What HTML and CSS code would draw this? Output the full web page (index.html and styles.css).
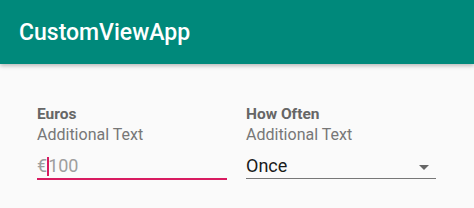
FILE: index.html
```html
<!DOCTYPE html>
<html>
<head>
    <meta charset="utf-8">
    <title>CustomViewApp</title>
    <link rel="stylesheet" href="styles.css">
</head>
<body>
    <div class="toolbar">
        <h1 class="app-title">CustomViewApp</h1>
    </div>

    <div class="content">
        <div class="field">
            <p class="label">Euros</p>
            <p class="extra">Additional Text</p>
            <div class="input active">
                <span class="hint">€</span><span class="cursor"></span><span class="hint">100</span>
            </div>
        </div>

        <div class="field">
            <p class="label">How Often</p>
            <p class="extra">Additional Text</p>
            <div class="input spinner">
                <span class="value">Once</span>
                <svg class="arrow" width="10" height="5" viewBox="0 0 10 5">
                    <path d="M0 0 L10 0 L5 5 Z" fill="#666"/>
                </svg>
            </div>
        </div>
    </div>
</body>
</html>
```
FILE: styles.css
```css
html {
    height: 100%;
}

body {
    margin: 0;
    background: #fafafa;
    font-family: Roboto, "Liberation Sans", sans-serif;
    height: 100%;
}

.toolbar {
    height: 64px;
    background: #00897b;
    display: flex;
    align-items: center;
    padding-left: 19px;
    box-shadow: 0 2px 4px rgba(0, 0, 0, 0.25);
    position: relative;
}

.app-title {
    margin: 0;
    color: #fff;
    font-size: 23px;
    font-weight: 500;
    line-height: 26px;
    padding-top: 1px;
}

.content {
    display: flex;
    gap: 19px;
    padding: 42px 38px 0 37px;
}

.field {
    flex: 1;
}

.label {
    margin: 0;
    font-size: 15.5px;
    line-height: 16px;
    font-weight: bold;
    color: #666;
}

.extra {
    margin: 3px 0 0;
    font-size: 16px;
    line-height: 20px;
    color: #777;
}

.input {
    margin-top: 9px;
    height: 24px;
    font-size: 18px;
    line-height: 24px;
    display: flex;
    align-items: center;
}

.active {
    border-bottom: 2px solid #d81b60;
}

.spinner {
    border-bottom: 1px solid #777;
    justify-content: space-between;
}

.hint {
    color: #9e9e9e;
}

.cursor {
    display: inline-block;
    width: 2px;
    height: 19px;
    background: #d81b60;
    margin: 0 -1px 0 0;
}

.value {
    color: #1a1a1a;
}

.arrow {
    margin-right: 7px;
    margin-top: 2px;
}
```
